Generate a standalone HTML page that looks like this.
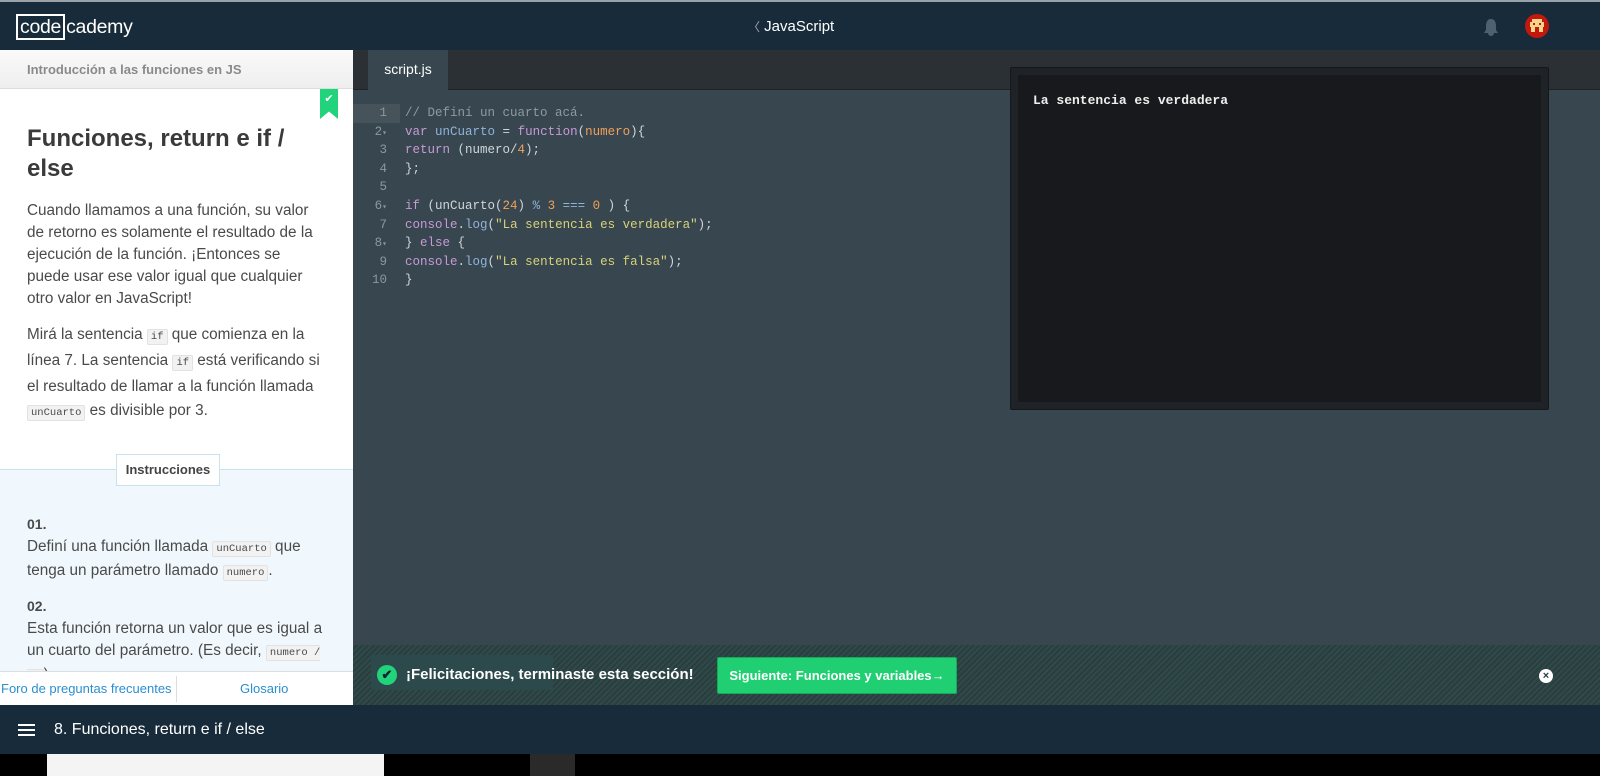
<!DOCTYPE html>
<html><head><meta charset="utf-8"><style>
*{margin:0;padding:0;box-sizing:border-box}
body{width:1600px;height:776px;overflow:hidden;background:#000;font-family:"Liberation Sans",sans-serif;position:relative}
.top{position:absolute;left:0;top:0;width:1600px;height:50px;background:#182b3a;border-top:2px solid #9aa3aa}
.logo{position:absolute;left:16px;top:14px;color:#fff;font-size:19.5px;letter-spacing:-0.3px}
.logo span{border:2px solid #fff;padding:0 2px;margin-right:1px}
.crumb{position:absolute;left:748px;top:16px;color:#fff;font-size:15px}
.left{position:absolute;left:0;top:50px;width:353px;height:655px;background:#fff;overflow:hidden}
.lh{height:39px;background:linear-gradient(#fafafa,#eeeeee);border-bottom:1px solid #ddd;color:#8a8a8a;font-weight:bold;font-size:13px;padding:12px 27px}
.bm{position:absolute;left:320px;top:39px;width:18px;height:30px;background:#21d37a;clip-path:polygon(0 0,100% 0,100% 100%,50% 75%,0 100%);color:#fff;font-size:11px;text-align:center;line-height:20px}
h1{position:absolute;left:27px;top:74px;font-size:24px;line-height:30px;color:#3a3a3a;width:300px}
.p{position:absolute;left:27px;color:#4a4a4a;font-size:15.3px;line-height:22px;width:300px}
code{font-family:"Liberation Mono",monospace;font-size:10.5px;background:#f2f2f2;border:1px solid #e2e2e2;border-radius:2px;padding:1px 3px}
.instr{position:absolute;left:0;top:419px;width:353px;height:300px;background:#f0f8fd;border-top:1px solid #c8e2ef}
.ib{position:absolute;left:116px;top:404px;width:104px;height:32px;border:1px solid #c8e2ef;background:#fff;color:#444;font-weight:bold;font-size:13px;text-align:center;line-height:30px}
.lf{position:absolute;left:0;top:621px;width:353px;height:34px;background:#fff;border-top:1px solid #ddd;font-size:13px;color:#2a8fd0}
.ed{position:absolute;left:353px;top:50px;width:1247px;height:655px;background:#37464f}
.tabs{position:absolute;left:0;top:0;width:1247px;height:40px;background:#2b3034;border-bottom:1px solid #1e2326}
.tab{position:absolute;left:15px;top:0;width:80px;height:41px;background:#37464f;color:#fff;font-size:14px;text-align:center;line-height:38px}
.code{position:absolute;top:54px;left:0;font-family:"Liberation Mono",monospace;font-size:12.5px;line-height:18.6px}
.ln{position:absolute;left:0;width:50px;color:#8b98a0;text-align:right;padding-right:16px}
.cl{position:absolute;left:52px;color:#cfd6da;white-space:pre}
.out{position:absolute;left:657px;top:17px;width:539px;height:343px;background:#1f2327;border:1px solid #15181a;border-radius:2px}
.out div{position:absolute;left:7px;top:7px;right:7px;bottom:7px;background:#18191c;color:#eee;font-family:"Liberation Mono",monospace;font-size:13px;font-weight:bold;padding:18px 15px}
.ban{position:absolute;left:0;top:595px;width:1247px;height:60px;background:repeating-linear-gradient(135deg,#2f4a48 0 2px,#2a3d3f 2px 4px)}
.btn{position:absolute;left:364px;top:12px;width:240px;height:37px;background:#1fcf72;border:1px solid #15a95b;border-radius:2px;color:#fff;font-weight:bold;font-size:13px;text-align:center;line-height:35px}
.bot{position:absolute;left:0;top:705px;width:1600px;height:49px;background:#182b3a;color:#fff;font-size:16px}
</style></head><body>
<div class="top">
<div class="logo"><span>code</span>cademy</div>
<div class="crumb"><span style="color:#aab;font-size:12px">〈</span> JavaScript</div>
<svg style="position:absolute;left:1482px;top:15px" width="18" height="20" viewBox="0 0 18 20"><path d="M9 2C5 2 4 6 4 9v4l-2 3h14l-2-3V9c0-3-1-7-5-7zM6 16a3 3 0 0 0 6 0" fill="#4f6170"/></svg>
<svg style="position:absolute;left:1525px;top:12px" width="24" height="24" viewBox="0 0 24 24"><circle cx="12" cy="12" r="12" fill="#c4170d"/><rect x="7" y="5" width="10" height="3" fill="#f2d48a"/><rect x="5" y="8" width="14" height="5" fill="#f2d48a"/><rect x="8" y="9" width="2" height="2" fill="#c4170d"/><rect x="14" y="9" width="2" height="2" fill="#c4170d"/><rect x="6" y="13" width="4" height="5" fill="#f2d48a"/><rect x="14" y="13" width="4" height="5" fill="#f2d48a"/></svg>
</div>
<div class="left">
<div class="lh">Introducción a las funciones en JS</div>
<div class="bm">✔</div>
<h1>Funciones, return e if / else</h1>
<div class="p" style="top:150px">Cuando llamamos a una función, su valor de retorno es solamente el resultado de la ejecución de la función. ¡Entonces se puede usar ese valor igual que cualquier otro valor en JavaScript!</div>
<div class="p" style="top:273px;line-height:24px">Mirá la sentencia <code>if</code> que comienza en la línea 7. La sentencia <code>if</code> está verificando si el resultado de llamar a la función llamada <code>unCuarto</code> es divisible por 3.</div>
<div class="instr"></div>
<div class="ib">Instrucciones</div>
<div class="p" style="top:463px"><b style="font-size:14px">01.</b><br>Definí una función llamada <code>unCuarto</code> que tenga un parámetro llamado <code>numero</code>.</div>
<div class="p" style="top:545px"><b style="font-size:14px">02.</b><br>Esta función retorna un valor que es igual a un cuarto del parámetro. (Es decir, <code>numero / 4;</code>)</div>
<div class="lf"><span style="position:absolute;left:1px;top:9px">Foro de preguntas frecuentes</span><span style="position:absolute;left:176px;top:4px;height:26px;border-left:1px solid #ddd"></span><span style="position:absolute;left:240px;top:9px">Glosario</span></div>
</div>
<div class="ed">
<div class="tabs"><div class="tab">script.js</div></div>
<div style="position:absolute;left:0;top:54px;width:47px;height:19px;background:#46535b"></div>
<div class="code">
<div class="ln" style="top:0">1</div><div class="ln" style="top:18.6px">2<span style="font-size:8px">▾</span></div><div class="ln" style="top:37.2px">3</div><div class="ln" style="top:55.8px">4</div><div class="ln" style="top:74.4px">5</div><div class="ln" style="top:93px">6<span style="font-size:8px">▾</span></div><div class="ln" style="top:111.6px">7</div><div class="ln" style="top:130.2px">8<span style="font-size:8px">▾</span></div><div class="ln" style="top:148.8px">9</div><div class="ln" style="top:167.4px">10</div>
<div class="cl" style="top:0;color:#8f9aa1">// Definí un cuarto acá.</div>
<div class="cl" style="top:18.6px"><span style="color:#c79ad6">var</span> <span style="color:#8fb4d8">unCuarto</span> = <span style="color:#c79ad6">function</span>(<span style="color:#f0a05a">numero</span>){</div>
<div class="cl" style="top:37.2px"><span style="color:#c79ad6">return</span> (numero/<span style="color:#f0a05a">4</span>);</div>
<div class="cl" style="top:55.8px">};</div>
<div class="cl" style="top:93px"><span style="color:#c79ad6">if</span> (unCuarto(<span style="color:#f0a05a">24</span>) <span style="color:#8fb4d8">%</span> <span style="color:#f0a05a">3</span> <span style="color:#8fb4d8">===</span> <span style="color:#f0a05a">0</span> ) {</div>
<div class="cl" style="top:111.6px"><span style="color:#c79ad6">console</span>.<span style="color:#8fb4d8">log</span>(<span style="color:#d9d27a">"La sentencia es verdadera"</span>);</div>
<div class="cl" style="top:130.2px">} <span style="color:#c79ad6">else</span> {</div>
<div class="cl" style="top:148.8px"><span style="color:#c79ad6">console</span>.<span style="color:#8fb4d8">log</span>(<span style="color:#d9d27a">"La sentencia es falsa"</span>);</div>
<div class="cl" style="top:167.4px">}</div>
</div>
<div class="out"><div>La sentencia es verdadera</div></div>
<div class="ban">
<div style="position:absolute;left:18px;top:10px;width:182px;height:35px;background:#2c4a4c"></div>
<div style="position:absolute;left:24px;top:20px;width:20px;height:20px;border-radius:50%;background:#21d37a;color:#123;font-size:13px;text-align:center;line-height:20px;font-weight:bold">✔</div>
<div style="position:absolute;left:53px;top:21px;color:#fff;font-weight:bold;font-size:15px">¡Felicitaciones, terminaste esta sección!</div>
<div class="btn">Siguiente: Funciones y variables→</div>
<div style="position:absolute;left:1186px;top:24px;width:14px;height:14px;border-radius:50%;background:#fff;color:#2a3d3f;font-size:11px;text-align:center;line-height:14px;font-weight:bold">×</div>
</div>
</div>
<div class="bot"><div style="position:absolute;left:18px;top:19px;width:17px;height:12px;border-top:2px solid #fff;border-bottom:2px solid #fff"><div style="margin-top:3px;border-top:2px solid #fff"></div></div><span style="position:absolute;left:54px;top:16px">8. Funciones, return e if / else</span></div>
<div style="position:absolute;left:47px;top:754px;width:337px;height:22px;background:#f4f4f4"></div>
<div style="position:absolute;left:530px;top:754px;width:45px;height:22px;background:#2a2a2a"></div>
</body></html>
